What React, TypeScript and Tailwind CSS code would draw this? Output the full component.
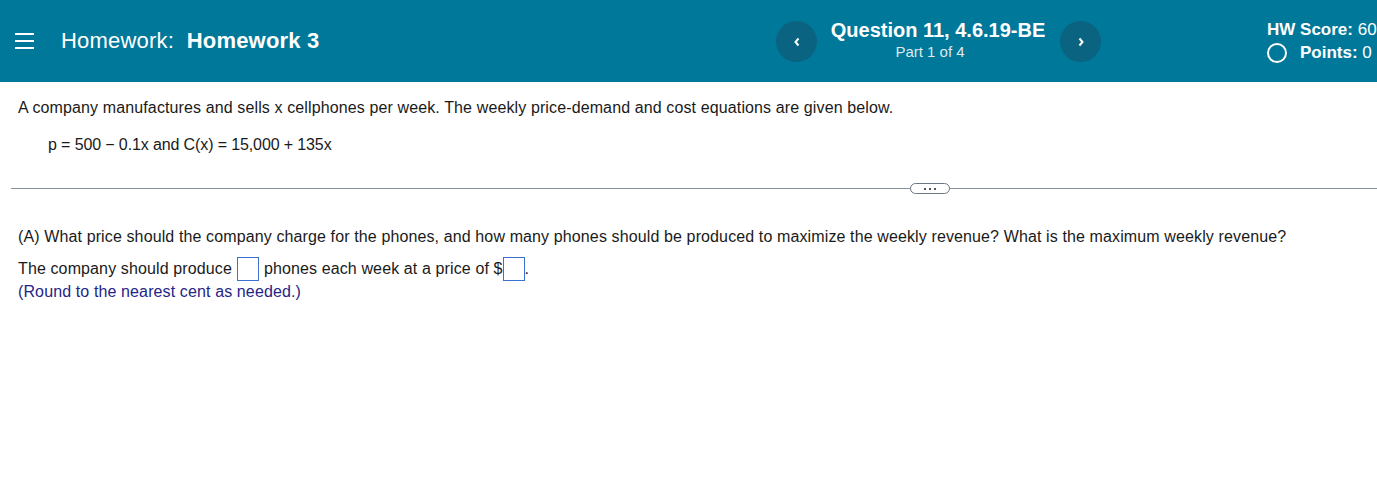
import React from "react";

export default function App() {
  return (
    <div className="w-[1377px] h-[481px] bg-white overflow-hidden" style={{ fontFamily: '"Liberation Sans", Arial, sans-serif' }}>
      <div className="h-[82px] bg-[#00789a] flex items-center text-white relative">
        <div className="ml-[15px] flex flex-col gap-[5px] w-[19px]">
          <div className="h-[2px] bg-white" />
          <div className="h-[2px] bg-white" />
          <div className="h-[2px] bg-white" />
        </div>
        <div className="ml-[27px] text-[22px] leading-none tracking-[0.2px]">
          Homework:&nbsp; <span className="font-bold">Homework 3</span>
        </div>
        <div className="absolute left-[776px] top-[21px] w-[41px] h-[41px] rounded-full bg-[#0a6380] flex items-center justify-center">
          <svg width="10" height="12" viewBox="0 0 10 12"><path d="M6.5 2.5 L3.5 6 L6.5 9.5" stroke="white" strokeWidth="2" fill="none" /></svg>
        </div>
        <div className="absolute left-[818px] w-[240px] top-[18px] text-center">
          <div className="text-[20px] font-bold leading-[24px]">Question 11, 4.6.19-BE</div>
        </div>
        <div className="absolute left-[830px] w-[200px] top-[43px] text-center text-[15px] leading-[18px] text-[#dfe9ee]">Part 1 of 4</div>
        <div className="absolute left-[1060px] top-[21px] w-[41px] h-[41px] rounded-full bg-[#0a6380] flex items-center justify-center">
          <svg width="10" height="12" viewBox="0 0 10 12"><path d="M3.5 2.5 L6.5 6 L3.5 9.5" stroke="white" strokeWidth="2" fill="none" /></svg>
        </div>
        <div className="absolute left-[1267px] top-[20px] text-[17px] leading-[20px] whitespace-nowrap">
          <div><span className="font-bold">HW Score:</span> 60</div>
          <div className="flex items-center mt-[3px]">
            <div className="w-[20px] h-[20px] rounded-full border-[2px] border-white" />
            <span className="ml-[13px] font-bold">Points:</span>&nbsp;0
          </div>
        </div>
      </div>
      <div className="text-[16px] text-[#1a1a1a] leading-[20px] tracking-[0.12px]">
        <div className="pl-[18px] pt-[16px]">A company manufactures and sells x cellphones per week. The weekly price-demand and cost equations are given below.</div>
        <div className="pl-[48px] pt-[17px] tracking-[-0.12px]">p = 500 − 0.1x and C(x) = 15,000 + 135x</div>
        <div className="relative mt-[33px] ml-[11px] h-[1px] bg-[#8a94a0]">
          <div className="absolute left-[899px] top-[-5px] w-[40px] h-[11px] rounded-full border border-[#6b7785] bg-white flex items-center justify-center gap-[3px]">
            <div className="w-[2px] h-[2px] bg-[#555]" />
            <div className="w-[2px] h-[2px] bg-[#555]" />
            <div className="w-[2px] h-[2px] bg-[#555]" />
          </div>
        </div>
        <div className="pl-[18px] pt-[38px]">(A) What price should the company charge for the phones, and how many phones should be produced to maximize the weekly revenue? What is the maximum weekly revenue?</div>
        <div className="pl-[18px] pt-[10px] flex items-center">
          <span>The company should produce</span>
          <span className="inline-block w-[22px] h-[24px] border border-[#3b6fd1] ml-[5px] mr-[5px]" />
          <span>phones each week at a price of $</span>
          <span className="inline-block w-[22px] h-[24px] border border-[#3b6fd1]" />
          <span>.</span>
        </div>
        <div className="pl-[18px] pt-[1px] text-[#252585]">(Round to the nearest cent as needed.)</div>
      </div>
    </div>
  );
}
